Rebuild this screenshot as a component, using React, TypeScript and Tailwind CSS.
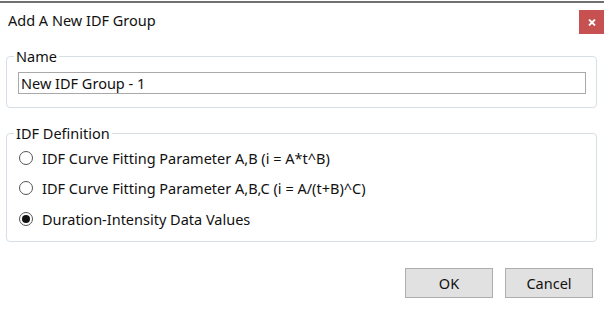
import React from "react";

export default function App() {
  return (
    <div className="relative h-[311px] w-[608px] bg-white font-['Noto_Sans',sans-serif] text-[14.5px] leading-[20px] text-[#111111]">
      <div className="mt-[1px] h-[2px] w-[604px] bg-[#707070]" />
      <div className="flex items-start justify-between pl-[8px] pr-[4px]">
        <div className="pt-[7px]">Add A New IDF Group</div>
        <button type="button" className="mt-[7px] flex h-[24px] w-[25px] items-center justify-center bg-[#c75050]">
          <svg width="8" height="7" viewBox="0 0 8 7">
            <path d="M1 0.5 L7 6.5 M7 0.5 L1 6.5" stroke="white" strokeWidth="1.8" />
          </svg>
        </button>
      </div>

      <fieldset className="ml-[6px] mt-[12px] w-[591px] rounded-[4px] border border-[#d5dfe5] pb-[13px] pl-[11px]">
        <legend className="ml-[-4px] px-[2px]">Name</legend>
        <input
          readOnly
          value="New IDF Group - 1"
          className="mt-[6px] h-[22px] w-[568px] border border-[#a9a9a9] px-[2px] outline-none"
        />
      </fieldset>

      <fieldset className="ml-[6px] mt-[15px] w-[591px] rounded-[4px] border border-[#d5dfe5] pb-[6px] pl-[12px]">
        <legend className="ml-[-5px] px-[2px]">IDF Definition</legend>
        <Radio label="IDF Curve Fitting Parameter A,B (i = A*t^B)" />
        <Radio label="IDF Curve Fitting Parameter A,B,C (i = A/(t+B)^C)" />
        <Radio label="Duration-Intensity Data Values" checked tall />
      </fieldset>

      <div className="mt-[26px] flex justify-end gap-[12px] pr-[15px]">
        <button type="button" className="h-[30px] w-[88px] border border-[#adadad] bg-[#e1e1e1]">OK</button>
        <button type="button" className="h-[30px] w-[88px] border border-[#adadad] bg-[#e1e1e1]">Cancel</button>
      </div>
    </div>
  );
}

function Radio({ label, checked, tall }: { label: string; checked?: boolean; tall?: boolean }) {
  return (
    <div className={`flex items-center gap-[9px] ${tall ? "h-[32px]" : "h-[30px]"}`}>
      <span className="flex h-[14px] w-[14px] items-center justify-center rounded-full border border-[#555555] bg-white">
        {checked ? <span className="h-[8px] w-[8px] rounded-full bg-[#111111]" /> : null}
      </span>
      <span>{label}</span>
    </div>
  );
}
